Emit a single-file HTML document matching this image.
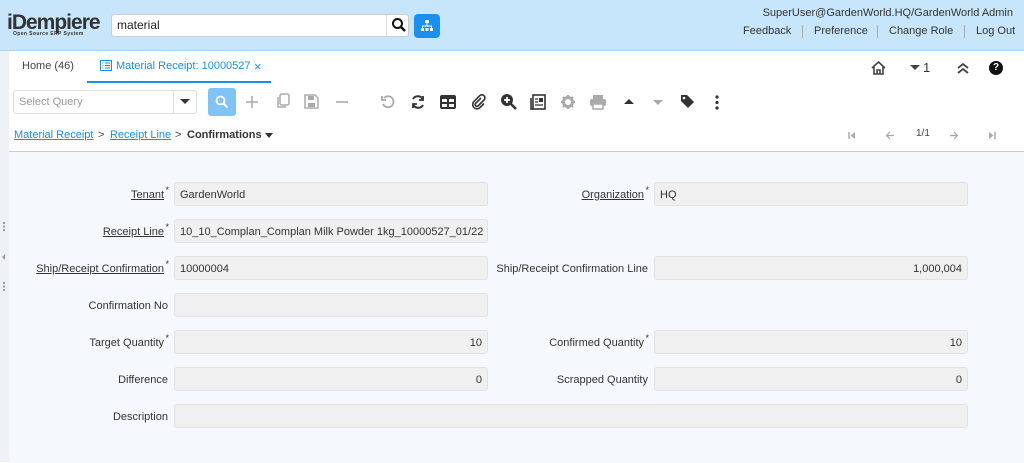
<!DOCTYPE html><html><head><style>
body{margin:0;width:1024px;height:462px;overflow:hidden;font-family:"Liberation Sans",sans-serif;font-size:12px;color:#333;background:#fff;position:relative}
.a{position:absolute}
.hdr{left:0;top:0;width:1024px;height:50px;background:#c7e6fb;border-bottom:1px solid #a9d4f5}
.lbl{position:absolute;text-align:right;font-size:11px;color:#333}
.u{text-decoration:underline}
.f{position:absolute;height:24px;background:#f0f0f0;border:1px solid #e2e2e2;border-radius:3px;box-sizing:border-box;font-size:11px;line-height:24px;padding:0 5px;color:#333}
.r{text-align:right}
.star{font-size:9px;position:absolute;top:-4px;right:-5px}
</style></head><body>
<div class="a hdr"></div>
<div class="a" style="left:7px;top:11px;font-size:21px;font-weight:bold;color:#333;letter-spacing:-1px">iDempiere</div>
<div class="a" style="left:13px;top:31px;font-size:5px;font-weight:bold;color:#333;letter-spacing:0.4px">Open Source ERP System</div>
<div class="a" style="left:111px;top:14px;width:298px;height:23px;background:#fff;border:1px solid #ccc;border-radius:3px;box-sizing:border-box"></div>
<div class="a" style="left:117px;top:18px;font-size:12px;color:#222">material</div>
<div class="a" style="left:386px;top:15px;width:1px;height:21px;background:#ddd"></div>
<svg class="a" style="left:391px;top:17px" width="16" height="16" viewBox="0 0 16 16"><circle cx="6.5" cy="6.5" r="4.5" fill="none" stroke="#111" stroke-width="2"/><path d="M10 10l4 4" stroke="#111" stroke-width="2.4"/></svg>
<div class="a" style="left:414px;top:14px;width:26px;height:24px;background:#1a90f0;border-radius:4px"></div>
<svg class="a" style="left:420px;top:19px" width="14" height="14" viewBox="0 0 14 14" fill="#fff"><rect x="5" y="1" width="4" height="3"/><rect x="1" y="9" width="3" height="3"/><rect x="5.5" y="9" width="3" height="3"/><rect x="10" y="9" width="3" height="3"/><path d="M7 4v3M2.5 9V7h9v2" stroke="#fff" fill="none"/></svg>
<div class="a" style="right:11px;top:7px;font-size:11px;color:#333">SuperUser@GardenWorld.HQ/GardenWorld Admin</div>
<div class="a" style="left:743px;top:25px;font-size:11px;color:#333">Feedback</div>
<div class="a" style="left:802px;top:25px;width:1px;height:13px;background:#aaa"></div>
<div class="a" style="left:814px;top:25px;font-size:11px">Preference</div>
<div class="a" style="left:877px;top:25px;width:1px;height:13px;background:#aaa"></div>
<div class="a" style="left:889px;top:25px;font-size:11px">Change Role</div>
<div class="a" style="left:964px;top:25px;width:1px;height:13px;background:#aaa"></div>
<div class="a" style="left:976px;top:25px;font-size:11px">Log Out</div>
<div class="a" style="left:0;top:51px;width:9px;height:411px;background:#eef2f7"></div>
<div class="a" style="left:22px;top:60px;font-size:11px;color:#444">Home (46)</div>
<svg class="a" style="left:100px;top:60px" width="12" height="11" viewBox="0 0 12 11"><rect x="0.5" y="0.5" width="11" height="10" fill="none" stroke="#1a8fe8"/><path d="M2.5 3h1M5 3h5M2.5 5.5h1M5 5.5h5M2.5 8h1M5 8h5" stroke="#1a8fe8"/></svg>
<div class="a" style="left:116px;top:60px;font-size:11px;color:#1a8fe8">Material Receipt: 10000527</div>
<div class="a" style="left:254px;top:59px;font-size:13px;color:#1a8fe8">×</div>
<div class="a" style="left:87px;top:81px;width:184px;height:2px;background:#1a8fe8"></div>
<svg class="a" style="left:870px;top:60px" width="17" height="16" viewBox="0 0 17 16"><path d="M2 8L8.5 2 15 8M4 7v7h9V7M7 14v-4h3v4" fill="none" stroke="#444" stroke-width="1.6"/></svg>
<div class="a" style="left:910px;top:65px;border:5px solid transparent;border-top:5px solid #444;border-bottom:0;width:0"></div>
<div class="a" style="left:923px;top:60px;font-size:13px;color:#333">1</div>
<svg class="a" style="left:956px;top:61px" width="14" height="14" viewBox="0 0 14 14"><path d="M2 7l5-4 5 4M2 12l5-4 5 4" fill="none" stroke="#444" stroke-width="1.8"/></svg>
<div class="a" style="left:989px;top:61px;width:14px;height:14px;border-radius:50%;background:#111;color:#fff;font-size:10px;font-weight:bold;text-align:center;line-height:14px">?</div>
<div class="a" style="left:13px;top:90px;width:184px;height:24px;border:1px solid #ddd;border-radius:3px;box-sizing:border-box;background:#fff"></div>
<div class="a" style="left:19px;top:96px;font-size:11px;color:#999">Select Query</div>
<div class="a" style="left:173px;top:91px;width:1px;height:22px;background:#ddd"></div>
<div class="a" style="left:180px;top:99px;border:5px solid transparent;border-top:5px solid #333;border-bottom:0;width:0"></div>
<div class="a" style="left:208px;top:88px;width:28px;height:28px;background:#80c3f7;border-radius:3px"></div>
<svg class="a" style="left:215px;top:95px" width="14" height="14" viewBox="0 0 14 14"><circle cx="5.5" cy="5.5" r="4" fill="none" stroke="#fff" stroke-width="1.8"/><path d="M8.5 8.5l4 4" stroke="#fff" stroke-width="2"/></svg>
<svg class="a" style="left:244px;top:94px" width="16" height="16"><path d="M8 2v12M2 8h12" stroke="#aaa" stroke-width="1.6"/></svg>
<svg class="a" style="left:275px;top:93px" width="16" height="17"><rect x="5" y="1" width="9" height="11" rx="2" fill="none" stroke="#aaa" stroke-width="1.5"/><path d="M3 4v10h8" fill="none" stroke="#aaa" stroke-width="1.5"/></svg>
<svg class="a" style="left:304px;top:94px" width="15" height="15"><path d="M1 1h10l3 3v10H1z" fill="none" stroke="#aaa" stroke-width="1.5"/><rect x="4" y="2" width="6" height="4" fill="#aaa"/><rect x="4" y="9" width="7" height="4" fill="#aaa"/></svg>
<svg class="a" style="left:334px;top:94px" width="16" height="16"><path d="M2 8h12" stroke="#aaa" stroke-width="1.6"/></svg>
<svg class="a" style="left:380px;top:94px" width="16" height="16"><path d="M4 4A5.5 5.5 0 1 1 3 10" fill="none" stroke="#aaa" stroke-width="1.8"/><path d="M2 2v4h4" fill="none" stroke="#aaa" stroke-width="1.8"/></svg>
<svg class="a" style="left:410px;top:94px" width="16" height="16"><path d="M13 6A5.5 5.5 0 0 0 3 5M3 10a5.5 5.5 0 0 0 10 1" fill="none" stroke="#333" stroke-width="2"/><path d="M13 2v4h-4M3 14v-4h4" fill="none" stroke="#333" stroke-width="1.8"/></svg>
<svg class="a" style="left:440px;top:95px" width="16" height="14"><rect x="0" y="0" width="16" height="14" rx="2" fill="#333"/><rect x="2" y="4" width="5" height="3" fill="#fff"/><rect x="9" y="4" width="5" height="3" fill="#fff"/><rect x="2" y="9" width="5" height="3" fill="#fff"/><rect x="9" y="9" width="5" height="3" fill="#fff"/></svg>
<svg class="a" style="left:471px;top:94px" width="16" height="16"><path d="M10 4L4.5 9.5a1.8 1.8 0 0 0 2.5 2.5l6-6a3 3 0 0 0-4.3-4.3L2.5 8a4.3 4.3 0 0 0 6 6L13 9.5" fill="none" stroke="#333" stroke-width="1.6"/></svg>
<svg class="a" style="left:500px;top:93px" width="17" height="17"><circle cx="7" cy="7" r="6" fill="#333"/><path d="M7 4v6M4 7h6" stroke="#fff" stroke-width="1.8"/><path d="M11 11l5 5" stroke="#333" stroke-width="2.6"/></svg>
<svg class="a" style="left:530px;top:94px" width="16" height="16"><rect x="3" y="1" width="12" height="14" fill="none" stroke="#333" stroke-width="1.6"/><path d="M1 4v11h2" fill="none" stroke="#333" stroke-width="1.6"/><rect x="9" y="4" width="4" height="4" fill="#333"/><path d="M5 5h3M5 8h3M5 11h8" stroke="#333" stroke-width="1.3"/></svg>
<svg class="a" style="left:560px;top:94px" width="16" height="16"><circle cx="8" cy="8" r="4.5" fill="none" stroke="#aaa" stroke-width="3"/><path d="M8 1v3M8 12v3M1 8h3M12 8h3M3 3l2 2M11 11l2 2M3 13l2-2M11 5l2-2" stroke="#aaa" stroke-width="2.2"/></svg>
<svg class="a" style="left:589px;top:94px" width="18" height="16"><rect x="4" y="1" width="10" height="4" fill="#aaa"/><rect x="1" y="5" width="16" height="7" rx="2" fill="#aaa"/><rect x="4" y="10" width="10" height="5" fill="#fff" stroke="#aaa" stroke-width="1.5"/></svg>
<div class="a" style="left:624px;top:99px;border:5px solid transparent;border-bottom:5px solid #333;border-top:0;width:0"></div>
<div class="a" style="left:653px;top:100px;border:5px solid transparent;border-top:5px solid #aaa;border-bottom:0;width:0"></div>
<svg class="a" style="left:680px;top:94px" width="15" height="15"><path d="M1 1h6l7 7-6 6-7-7z" fill="#333"/><circle cx="4" cy="4" r="1.3" fill="#fff"/></svg>
<svg class="a" style="left:714px;top:95px" width="6" height="15"><circle cx="3" cy="2" r="1.6" fill="#333"/><circle cx="3" cy="7.5" r="1.6" fill="#333"/><circle cx="3" cy="13" r="1.6" fill="#333"/></svg>
<div class="a" style="left:14px;top:129px;font-size:11px;color:#1a8fe8;text-decoration:underline">Material Receipt</div>
<div class="a" style="left:98px;top:129px;font-size:11px;color:#444">&gt;</div>
<div class="a" style="left:110px;top:129px;font-size:11px;color:#1a8fe8;text-decoration:underline">Receipt Line</div>
<div class="a" style="left:175px;top:129px;font-size:11px;color:#444">&gt;</div>
<div class="a" style="left:187px;top:129px;font-size:11px;color:#333;font-weight:bold">Confirmations</div>
<div class="a" style="left:265px;top:133px;border:4px solid transparent;border-top:5px solid #333;border-bottom:0;width:0"></div>
<svg class="a" style="left:848px;top:131px" width="8" height="9"><path d="M1 1v7" stroke="#aaa" stroke-width="1.5"/><path d="M7 1v7L2.5 4.5z" fill="#aaa"/></svg>
<svg class="a" style="left:885px;top:131px" width="10" height="9"><path d="M9 4.5H2M5 1L1.5 4.5 5 8" fill="none" stroke="#aaa" stroke-width="1.2"/></svg>
<div class="a" style="left:916px;top:128px;font-size:10px;color:#444">1/1</div>
<svg class="a" style="left:949px;top:131px" width="10" height="9"><path d="M1 4.5h7M5 1l3.5 3.5L5 8" fill="none" stroke="#aaa" stroke-width="1.2"/></svg>
<svg class="a" style="left:988px;top:131px" width="8" height="9"><path d="M7 1v7" stroke="#aaa" stroke-width="1.5"/><path d="M1 1v7l4.5-3.5z" fill="#aaa"/></svg>
<div class="a" style="left:9px;top:151px;width:1015px;height:311px;background:#f5f8fc;border-top:1px solid #ccc"></div>
<div class="a" style="left:3px;top:222px;width:2px;height:9px;background:repeating-linear-gradient(#999 0 2px,transparent 2px 3.5px)"></div>
<div class="a" style="left:2px;top:254px;border:3px solid transparent;border-right:3px solid #999;border-left:0"></div>
<div class="a" style="left:3px;top:282px;width:2px;height:9px;background:repeating-linear-gradient(#999 0 2px,transparent 2px 3.5px)"></div>

<div class="lbl u" style="right:860px;top:189px">Tenant<span class="star">*</span></div>
<div class="f" style="left:174px;top:182px;width:314px">GardenWorld</div>
<div class="lbl u" style="right:380px;top:189px">Organization<span class="star">*</span></div>
<div class="f" style="left:654px;top:182px;width:314px">HQ</div>

<div class="lbl u" style="right:860px;top:226px">Receipt Line<span class="star">*</span></div>
<div class="f" style="left:174px;top:219px;width:314px;white-space:nowrap;overflow:hidden">10_10_Complan_Complan Milk Powder 1kg_10000527_01/22</div>

<div class="lbl u" style="right:860px;top:263px">Ship/Receipt Confirmation<span class="star">*</span></div>
<div class="f" style="left:174px;top:256px;width:314px">10000004</div>
<div class="lbl" style="right:376px;top:263px">Ship/Receipt Confirmation Line</div>
<div class="f r" style="left:654px;top:256px;width:314px">1,000,004</div>

<div class="lbl" style="right:856px;top:300px">Confirmation No</div>
<div class="f" style="left:174px;top:293px;width:314px"></div>

<div class="lbl" style="right:860px;top:337px">Target Quantity<span class="star">*</span></div>
<div class="f r" style="left:174px;top:330px;width:314px">10</div>
<div class="lbl" style="right:380px;top:337px">Confirmed Quantity<span class="star">*</span></div>
<div class="f r" style="left:654px;top:330px;width:314px">10</div>

<div class="lbl" style="right:856px;top:374px">Difference</div>
<div class="f r" style="left:174px;top:367px;width:314px">0</div>
<div class="lbl" style="right:376px;top:374px">Scrapped Quantity</div>
<div class="f r" style="left:654px;top:367px;width:314px">0</div>

<div class="lbl" style="right:856px;top:411px">Description</div>
<div class="f" style="left:174px;top:404px;width:794px"></div>
</body></html>
